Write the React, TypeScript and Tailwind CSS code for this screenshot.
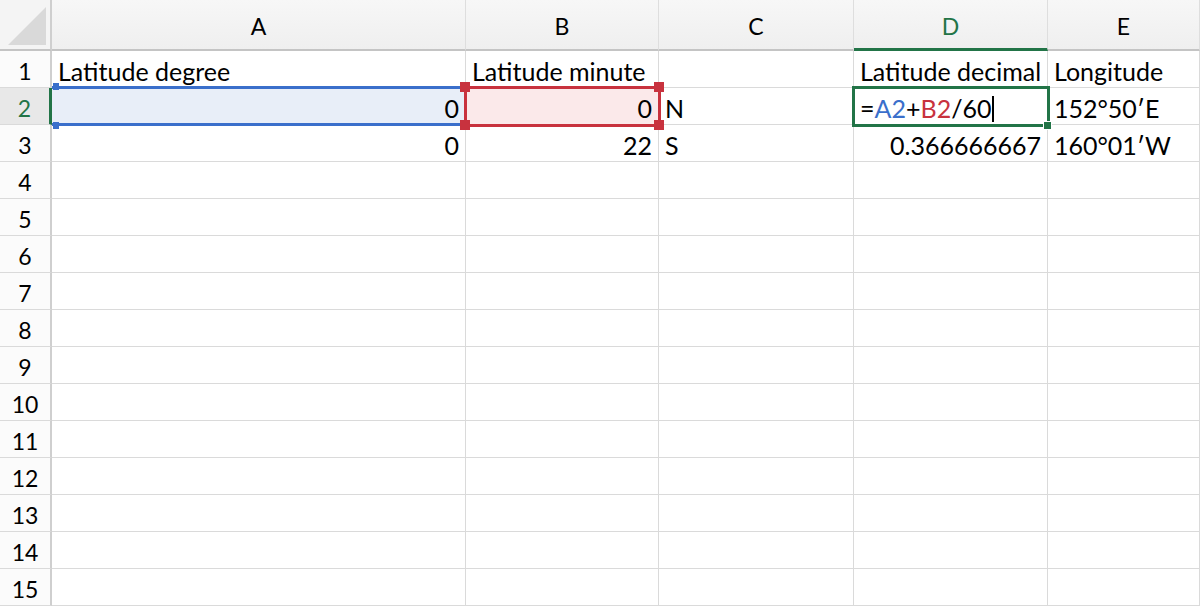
import React from 'react'

const COLS = ['A', 'B', 'C', 'D', 'E']

type Cell = { v?: React.ReactNode; right?: boolean }

const DATA: Record<number, Cell[]> = {
  1: [{ v: 'Latitude degree' }, { v: 'Latitude minute' }, {}, { v: 'Latitude decimal' }, { v: 'Longitude' }],
  2: [{ v: '0', right: true }, { v: '0', right: true }, { v: 'N' }, {}, { v: '152°50′E' }],
  3: [{ v: '0', right: true }, { v: '22', right: true }, { v: 'S' }, { v: '0.366666667', right: true }, { v: '160°01′W' }],
}

function Formula() {
  return (
    <span className="flex items-end">
      <span>=</span>
      <span className="text-[#3a6fcb]">A2</span>
      <span>+</span>
      <span className="text-[#c8323e]">B2</span>
      <span>/60</span>
      <span className="mb-[-1px] ml-[1px] inline-block h-[26px] w-[1.5px] bg-black" />
    </span>
  )
}

// little square grips on the referenced range corners
function Grip({ className }: { className: string }) {
  return <span className={`absolute z-20 h-[10px] w-[10px] bg-[#c8323e] ${className}`} />
}

export default function App() {
  const rows = Array.from({ length: 15 }, (_, i) => i + 1)

  return (
    <div className="h-[606px] w-[1200px] overflow-hidden bg-white font-['Lato','Liberation_Sans',sans-serif] text-black">
      <div className="grid grid-cols-[52px_414px_193px_195px_194px_152px] grid-rows-[51px_repeat(15,37px)]">
        {/* corner */}
        <div className="flex items-end justify-end border-r-2 border-b-2 border-r-[#cfcfcf] border-b-[#c4c4c4] bg-[#f4f4f4] pr-[4px] pb-[4px]">
          <svg width="38" height="38" viewBox="0 0 38 38">
            <polygon points="38,0 38,38 0,38" fill="#d9d9d9" />
          </svg>
        </div>

        {COLS.map(c => (
          <div key={c}
            className={`flex items-center justify-center border-r border-b-2 border-r-[#dedede] bg-gradient-to-b from-[#f7f7f7] to-[#efefef] pt-[4px] text-[23px] ${c === 'D' ? 'border-b-[3px] border-b-[#227447] text-[#227447]' : 'border-b-[#c4c4c4]'}`}>
            {c}
          </div>
        ))}

        {rows.map(r => (
          <React.Fragment key={r}>
            <div className={`flex items-end justify-center border-b border-b-[#dadada] pb-[3px] text-[23px] leading-[26px] ${r === 2 ? 'border-r-[3px] border-r-[#227447] bg-[#e8e8e8] text-[#227447]' : 'border-r-2 border-r-[#cfcfcf] bg-[#fbfbfb]'}`}>
              {r}
            </div>

            {COLS.map((c, ci) => {
              const cell = DATA[r]?.[ci] ?? {}
              const isA2 = r === 2 && c === 'A'
              const isB2 = r === 2 && c === 'B'
              const isD2 = r === 2 && c === 'D'
              return (
                <div key={c}
                  className={`relative flex items-end whitespace-nowrap border-r border-b border-[#dadada] px-[6px] pb-[3px] text-[25px] leading-[26px]
                    ${cell.right ? 'justify-end' : ''}
                    ${isA2 ? 'bg-[#e8eef8]' : ''}
                    ${isB2 ? 'bg-[#fbe9ea] outline-[3px] outline-[#c8323e] -outline-offset-1 outline-solid' : ''}
                    ${isD2 ? 'z-10 outline-[3px] outline-[#227447] -outline-offset-1 outline-solid' : ''}`}>
                  {isD2 ? <Formula /> : cell.v}

                  {isA2 && (
                    <>
                      {/* referenced range highlight */}
                      <span className="absolute left-0 right-[4px] top-[-2px] z-10 h-[3px] bg-[#3a6fcb]" />
                      <span className="absolute left-0 right-[4px] bottom-[-2px] z-10 h-[3px] bg-[#3a6fcb]" />
                      <span className="absolute left-[1px] top-[-5px] z-10 h-[7px] w-[6px] bg-[#3a6fcb]" />
                      <span className="absolute left-[1px] bottom-[-5px] z-10 h-[7px] w-[6px] bg-[#3a6fcb]" />
                    </>
                  )}

                  {isB2 && (
                    <>
                      <Grip className="left-[-6px] top-[-6px]" />
                      <Grip className="right-[-6px] top-[-6px]" />
                      <Grip className="left-[-6px] bottom-[-6px]" />
                      <Grip className="right-[-6px] bottom-[-6px]" />
                    </>
                  )}

                  {isD2 && <span className="absolute right-[-5px] bottom-[-6px] z-20 h-[9px] w-[9px] border border-white bg-[#227447]" />}
                </div>
              )
            })}
          </React.Fragment>
        ))}
      </div>
    </div>
  )
}
